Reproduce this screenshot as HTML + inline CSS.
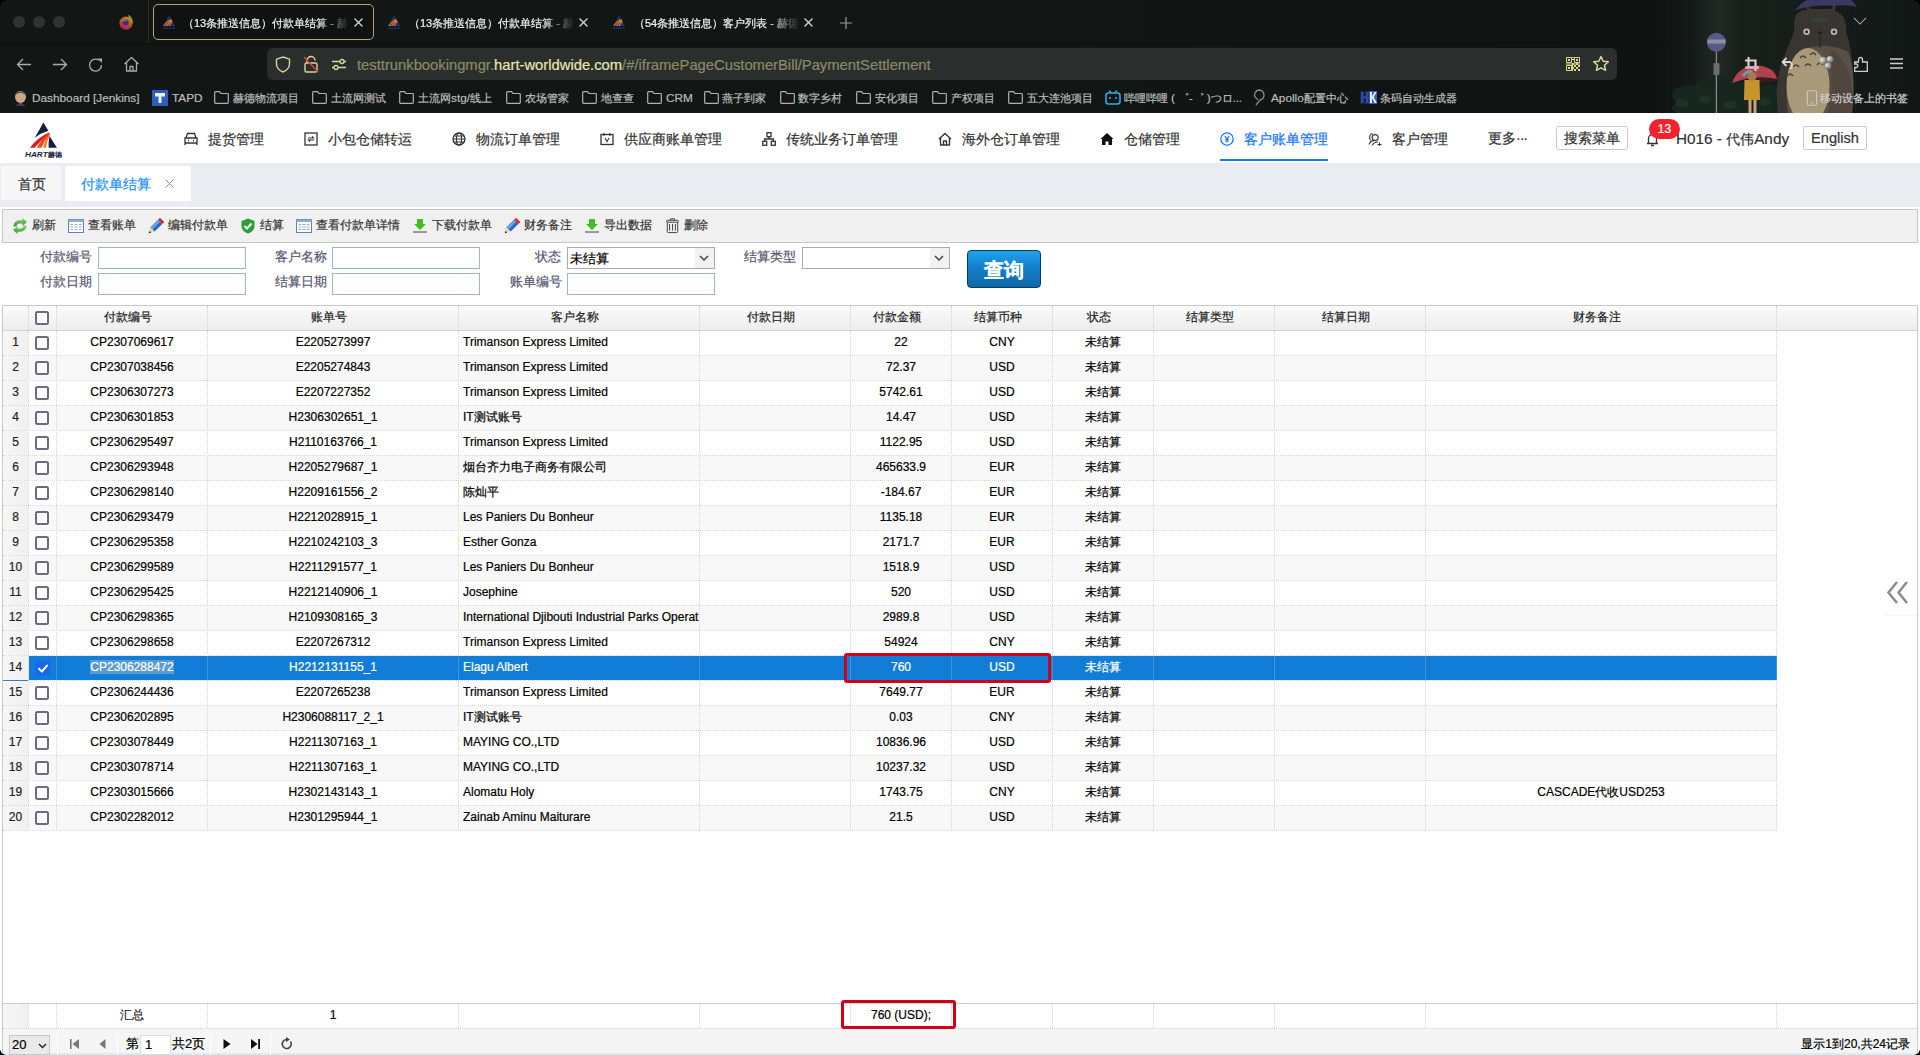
<!DOCTYPE html>
<html><head><meta charset="utf-8">
<style>
*{box-sizing:border-box;margin:0;padding:0}
html,body{width:1920px;height:1055px;overflow:hidden;background:#fff;font-family:"Liberation Sans",sans-serif;position:relative;-webkit-text-stroke:0.2px currentColor}
.a{position:absolute;white-space:nowrap}
#chrome{position:absolute;left:0;top:0;width:1920px;height:113px;background:linear-gradient(90deg,#121716 0%,#121716 50%,#0f1413 85%,#0e1312 100%);overflow:hidden}
#chrome .t{color:#f0f0f0;font-size:11px;font-weight:500}
#chrome .bm{color:#bdbdbd;font-size:11px;top:91px;line-height:14px;font-weight:500}
.L{font-size:11.8px}
#hdr{position:absolute;left:0;top:113px;width:1920px;height:50px;background:#fff}
#tabs{position:absolute;left:0;top:163px;width:1920px;height:44px;background:#e9ecf0}
#tb{position:absolute;left:2px;top:209px;width:1916px;height:34px;background:#f0f0f0;border:1px solid #c6c6c6}
.tbi{position:absolute;top:218px;font-size:12px;color:#333;line-height:15px}
.lbl{position:absolute;font-size:13px;color:#565670;line-height:15px}
.inp{position:absolute;height:22px;border:1px solid #9eb4ca;background:#fff;width:148px}
.sel{position:absolute;height:22px;border:1px solid #aaa;background:#fff;width:148px}

</style></head><body>
<div id="chrome">
<div class="a" style="left:13px;top:16px;width:12px;height:12px;border-radius:6px;background:#303332"></div>
<div class="a" style="left:33px;top:16px;width:12px;height:12px;border-radius:6px;background:#303332"></div>
<div class="a" style="left:53px;top:16px;width:12px;height:12px;border-radius:6px;background:#303332"></div>
<svg class="a" style="left:118px;top:14px" width="16" height="16" viewBox="0 0 16 16" opacity=".85">
<defs><linearGradient id="ff1" x1=".8" y1="0" x2=".3" y2="1"><stop offset="0" stop-color="#c8b02a"/><stop offset=".5" stop-color="#d0602a"/><stop offset="1" stop-color="#c81c6a"/></linearGradient></defs>
<circle cx="8" cy="9.2" r="6.6" fill="url(#ff1)"/><path d="M10.3 0.8 Q15.5 3.5 14.6 9.5 L11 6.5Z" fill="#b8a52a"/>
<path d="M1.5 7.5 Q3 4 6.5 4.2 Q4.8 5.5 5 8Z" fill="#c07a28"/>
<circle cx="7.6" cy="8.6" r="3" fill="#5526b0"/><path d="M5.5 5.8 Q8 4.8 9.5 6.5 Q7 6.2 5.5 8Z" fill="#c8902a"/></svg>
<div class="a" style="left:148px;top:0;width:1px;height:43px;background:#2b2e2e"></div>
<div class="a" style="left:0;top:43px;width:1920px;height:1px;background:#0b0e0d"></div>
<div class="a" style="left:153px;top:4px;width:221px;height:36px;border:1.5px solid #b5a66e;border-radius:5px;background:#0f1211"></div>
<svg class="a" style="left:161px;top:14px" width="16" height="16" viewBox="0 0 16 16">
<path d="M8 1.5 L14 12 L2 12Z" fill="#22346e"/><path d="M3 12 Q6 7 10.5 5.5 M5.5 12 Q8 7.5 11 6.5 M8 12 Q9.5 8.5 11.5 7.5" stroke="#e87a1e" stroke-width="1.2" fill="none"/><rect x="2" y="13.3" width="12" height="1.5" fill="#22346e" opacity=".8"/></svg>
<div class="a t" style="left:183px;top:15px;width:167px;overflow:hidden;line-height:16px;-webkit-mask-image:linear-gradient(90deg,#000 80%,transparent 100%)">（13条推送信息）付款单结算 - 赫德</div>
<svg class="a" style="left:354px;top:18px" width="9" height="9" viewBox="0 0 9 9"><path d="M0.5 0.5L8.5 8.5M8.5 0.5L0.5 8.5" stroke="#dcdcdc" stroke-width="1.2"/></svg>
<svg class="a" style="left:386px;top:14px" width="16" height="16" viewBox="0 0 16 16">
<path d="M8 1.5 L14 12 L2 12Z" fill="#22346e"/><path d="M3 12 Q6 7 10.5 5.5 M5.5 12 Q8 7.5 11 6.5 M8 12 Q9.5 8.5 11.5 7.5" stroke="#e87a1e" stroke-width="1.2" fill="none"/><rect x="2" y="13.3" width="12" height="1.5" fill="#22346e" opacity=".8"/></svg>
<div class="a t" style="left:409px;top:15px;width:166px;overflow:hidden;line-height:16px;-webkit-mask-image:linear-gradient(90deg,#000 80%,transparent 100%)">（13条推送信息）付款单结算 - 赫德</div>
<svg class="a" style="left:579px;top:18px" width="9" height="9" viewBox="0 0 9 9"><path d="M0.5 0.5L8.5 8.5M8.5 0.5L0.5 8.5" stroke="#dcdcdc" stroke-width="1.2"/></svg>
<svg class="a" style="left:611px;top:14px" width="16" height="16" viewBox="0 0 16 16">
<path d="M8 1.5 L14 12 L2 12Z" fill="#22346e"/><path d="M3 12 Q6 7 10.5 5.5 M5.5 12 Q8 7.5 11 6.5 M8 12 Q9.5 8.5 11.5 7.5" stroke="#e87a1e" stroke-width="1.2" fill="none"/><rect x="2" y="13.3" width="12" height="1.5" fill="#22346e" opacity=".8"/></svg>
<div class="a t" style="left:634px;top:15px;width:166px;overflow:hidden;line-height:16px;-webkit-mask-image:linear-gradient(90deg,#000 80%,transparent 100%)">（54条推送信息）客户列表 - 赫德</div>
<svg class="a" style="left:804px;top:18px" width="9" height="9" viewBox="0 0 9 9"><path d="M0.5 0.5L8.5 8.5M8.5 0.5L0.5 8.5" stroke="#dcdcdc" stroke-width="1.2"/></svg>
<svg class="a" style="left:840px;top:17px" width="12" height="12" viewBox="0 0 12 12"><path d="M6 0V12M0 6H12" stroke="#9a9a9a" stroke-width="1.2"/></svg>
<svg class="a" style="left:16px;top:58px" width="16" height="13" viewBox="0 0 16 13"><path d="M15 6.5H1.5M7 1L1.5 6.5L7 12" stroke="#aaa" stroke-width="1.3" fill="none"/></svg>
<svg class="a" style="left:52px;top:58px" width="16" height="13" viewBox="0 0 16 13"><path d="M1 6.5H14.5M9 1L14.5 6.5L9 12" stroke="#aaa" stroke-width="1.3" fill="none"/></svg>
<svg class="a" style="left:88px;top:57px" width="16" height="16" viewBox="0 0 16 16"><path d="M13.5 8A6 6 0 1 1 11 3.2" stroke="#aaa" stroke-width="1.3" fill="none"/><path d="M9.5 1.5L14 1.5L14 6Z" fill="#aaa"/></svg>
<svg class="a" style="left:123px;top:56px" width="17" height="16" viewBox="0 0 17 16"><path d="M1.5 8L8.5 1.5L15.5 8M3.5 6.5V15H13.5V6.5M7 15V10.5H10V15" stroke="#aaa" stroke-width="1.3" fill="none" stroke-linejoin="round"/></svg>
<div class="a" style="left:267px;top:48px;width:1350px;height:32px;border-radius:6px;background:#2a2f2d"></div>
<svg class="a" style="left:275px;top:56px" width="16" height="17" viewBox="0 0 16 17"><path d="M8 1L14.5 3.2V8C14.5 12 11 15 8 16C5 15 1.5 12 1.5 8V3.2Z" stroke="#d9d49a" stroke-width="1.4" fill="none"/></svg>
<svg class="a" style="left:303px;top:55px" width="16" height="18" viewBox="0 0 16 18"><path d="M4 8V5.5A4 4 0 0 1 12 5.5" stroke="#d9d49a" stroke-width="1.4" fill="none"/><rect x="2" y="8" width="12" height="9" rx="1.5" stroke="#d9d49a" stroke-width="1.4" fill="none"/><path d="M1 2L15 17" stroke="#e03a3a" stroke-width="1.5"/></svg>
<svg class="a" style="left:331px;top:58px" width="16" height="13" viewBox="0 0 16 13"><path d="M1 3.5H9M13 3.5H15M1 9.5H3M7 9.5H15" stroke="#d9d49a" stroke-width="1.3"/><circle cx="11" cy="3.5" r="2" stroke="#d9d49a" stroke-width="1.3" fill="none"/><circle cx="5" cy="9.5" r="2" stroke="#d9d49a" stroke-width="1.3" fill="none"/></svg>
<div class="a" style="left:357px;top:56px;font-size:14.78px;line-height:18px;color:#8c8967">testtrunkbookingmgr.<span style="color:#e9e6ad">hart-worldwide.com</span>/#/iframePageCustomerBill/PaymentSettlement</div>
<svg class="a" style="left:1566px;top:57px" width="14" height="14" viewBox="0 0 14 14" fill="#dcd894"><path d="M0.5 0.5H5.5V5.5H0.5Z" fill="none" stroke="#dcd894" stroke-width="1"/><rect x="2" y="2" width="2" height="2"/><path d="M8.5 0.5H13.5V5.5H8.5Z" fill="none" stroke="#dcd894" stroke-width="1"/><rect x="10" y="2" width="2" height="2"/><path d="M0.5 8.5H5.5V13.5H0.5Z" fill="none" stroke="#dcd894" stroke-width="1"/><rect x="2" y="10" width="2" height="2"/><rect x="6" y="0" width="2" height="1"/><rect x="6" y="2" width="2" height="1"/><rect x="0" y="6.5" width="14" height="1"/><rect x="6" y="6" width="1" height="8"/><rect x="6" y="6" width="2" height="2"/><rect x="10" y="6" width="2" height="2"/><rect x="8" y="8" width="2" height="2"/><rect x="12" y="8" width="2" height="2"/><rect x="6" y="10" width="2" height="2"/><rect x="10" y="10" width="2" height="2"/><rect x="8" y="12" width="2" height="2"/><rect x="12" y="12" width="2" height="2"/></svg>
<svg class="a" style="left:1592px;top:55px" width="18" height="17" viewBox="0 0 18 17"><path d="M9 1.5L11.2 6.2L16.3 6.8L12.5 10.3L13.6 15.3L9 12.8L4.4 15.3L5.5 10.3L1.7 6.8L6.8 6.2Z" stroke="#dcd894" stroke-width="1.5" fill="none" stroke-linejoin="round"/></svg>
<svg class="a" style="left:1660px;top:0" width="260" height="113" viewBox="0 0 260 113">
<defs>
<linearGradient id="tr" x1="0" x2="1"><stop offset="0" stop-color="#111513" stop-opacity="0"/><stop offset=".18" stop-color="#18201c"/><stop offset=".7" stop-color="#141a17"/><stop offset="1" stop-color="#101614"/></linearGradient>
<linearGradient id="trunk" x1="0" x2="1"><stop offset="0" stop-color="#262b26" stop-opacity="0"/><stop offset=".5" stop-color="#272c26"/><stop offset="1" stop-color="#262b26" stop-opacity="0"/></linearGradient>
<pattern id="rain" width="3" height="113" patternUnits="userSpaceOnUse"><rect x="0" y="0" width="1" height="113" fill="#ffffff" opacity=".01"/></pattern>
<radialGradient id="bell" cx=".35" cy=".35" r=".7"><stop offset="0" stop-color="#e8e8e0"/><stop offset="1" stop-color="#5a5a55"/></radialGradient>
</defs>
<rect x="0" y="0" width="260" height="113" fill="url(#tr)"/>
<rect x="38" y="0" width="42" height="113" fill="url(#trunk)" opacity=".6"/>
<g fill="#16261e">
<ellipse cx="30" cy="95" rx="18" ry="10"/><ellipse cx="55" cy="88" rx="20" ry="12"/><ellipse cx="80" cy="96" rx="22" ry="14"/>
<ellipse cx="40" cy="108" rx="28" ry="9"/><ellipse cx="100" cy="108" rx="26" ry="9"/><ellipse cx="110" cy="95" rx="14" ry="10"/>
</g>
<g fill="#223a2e" opacity=".6"><ellipse cx="22" cy="103" rx="7" ry="4"/><ellipse cx="45" cy="99" rx="6" ry="4"/><ellipse cx="70" cy="105" rx="7" ry="4"/><ellipse cx="105" cy="102" rx="6" ry="4"/></g>
<line x1="56.4" y1="48" x2="56.4" y2="113" stroke="#8a8890" stroke-width="1.2"/>
<rect x="53.5" y="63" width="6" height="12" rx="1" fill="#6a6a70"/>
<circle cx="56.4" cy="42.3" r="9.5" fill="#595887"/>
<rect x="47.5" y="39.5" width="18" height="4" fill="#8d8da8"/>
<path d="M94 69 L114 69 L120 80 L88 84 Z" fill="#3a1b1f"/>
<path d="M72 83 Q78 66 96 65.5 Q114 66 117 79 Q96 74 72 83Z" fill="#b0424e"/>
<path d="M84.5 80 L99.5 80 L100 100 L84 100Z" fill="#c7952e"/>
<circle cx="92" cy="76.5" r="4.5" fill="#a57a4a"/>
<path d="M83 76 Q88 70 92 72" stroke="#6a9ab0" stroke-width="3" fill="none"/>
<rect x="88.5" y="100" width="3" height="13" fill="#c9a07a"/><rect x="93.5" y="100" width="3" height="13" fill="#c9a07a"/>
<path d="M118 113 C115 92 117 70 126 52 C130 40 136 33 134 24 C134 14 140 10 147 10 L144 1 L151 9 L171 9 L176 1 L175 11 C184 14 187 22 186 32 C190 42 193 60 193 80 C193 95 192 105 190 113Z" fill="#38342f"/>
<path d="M128 113 C124 90 128 62 140 52 C150 44 175 44 188 52 C194 65 195 90 192 113Z" fill="#5a4f45"/>
<ellipse cx="148" cy="86" rx="21.5" ry="38" fill="#a89a77"/>
<path d="M170 50 C182 55 192 70 192 95 L192 113 L168 113 C172 95 172 70 170 50Z" fill="#4f453d"/>
<g stroke="#4a4642" stroke-width="1.6" fill="none"><path d="M140 58 Q143 54 146 58"/><path d="M150 55 Q153 51 156 55"/><path d="M133 67 Q136 63 139 67"/><path d="M145 66 Q148 62 151 66"/><path d="M157 65 Q160 61 163 65"/><path d="M127 76 Q130 72 133 76"/></g>
<path d="M135 10 Q150 -8 175 -6 Q192 -3 197 7 Q186 4 175 6 Q155 4 135 10Z" fill="#3a3760"/>
<path d="M150 20 Q160 16 170 20 Q160 24 150 20Z" fill="#2c4a30"/>
<circle cx="146.6" cy="31.8" r="3.3" fill="#b9b6bb"/><circle cx="146.6" cy="31.8" r="1.5" fill="#2a2725"/>
<circle cx="174" cy="31.8" r="3.3" fill="#b9b6bb"/><circle cx="174" cy="31.8" r="1.5" fill="#2a2725"/>
<ellipse cx="160" cy="32.7" rx="2.5" ry="1.2" fill="#1e1b1a"/>
<path d="M160 34 L160 48" stroke="#222" stroke-width="1"/>
<circle cx="163" cy="61" r="4.2" fill="url(#bell)"/><circle cx="170" cy="59.5" r="3.6" fill="url(#bell)"/><circle cx="168" cy="66" r="3.6" fill="url(#bell)"/>
<rect x="0" y="0" width="260" height="113" fill="url(#rain)"/>
</svg>
<svg class="a" style="left:1853px;top:17px" width="14" height="8" viewBox="0 0 16 9"><path d="M1 1L8 8L15 1" stroke="#a0a0a0" stroke-width="1.3" fill="none"/></svg>
<div class="a" style="left:0;top:0;width:7px;height:7px;background:radial-gradient(circle at 7px 7px,transparent 6.5px,#000 7px)"></div>
<div class="a" style="left:1913px;top:0;width:7px;height:7px;background:radial-gradient(circle at 0 7px,transparent 6.5px,#000 7px)"></div>
<svg class="a" style="left:1745px;top:57px" width="14" height="14" viewBox="0 0 14 14"><path d="M3.5 0V10.5H14M0 3.5H10.5V14" stroke="#d6d0d0" stroke-width="2.2" fill="none"/><path d="M0 10.5H14" stroke="#e8b0c0" stroke-width="2.2"/></svg>
<svg class="a" style="left:1781px;top:57px" width="14" height="12" viewBox="0 0 14 12"><path d="M1.5 5H9A4 4 0 0 1 9 12M5.5 1L1.5 5L5.5 9" stroke="#d8d8d8" stroke-width="1.8" fill="none"/></svg>
<svg class="a" style="left:1854px;top:56px" width="14" height="16" viewBox="0 0 14 16"><path d="M.7 6H4.5V3.5A2 2 0 0 1 8.5 3.5V6H13.3V15.3H.7V11.5H2.5A1.8 1.8 0 0 0 2.5 8H.7Z" stroke="#cfcfcf" stroke-width="1.3" fill="none"/></svg>
<svg class="a" style="left:1890px;top:58px" width="13" height="11" viewBox="0 0 13 11"><path d="M0 1H13M0 5.5H13M0 10H13" stroke="#cfcfcf" stroke-width="1.3"/></svg>
<svg class="a" style="left:13px;top:90px" width="15" height="16" viewBox="0 0 15 16"><ellipse cx="7.5" cy="7" rx="5.5" ry="6" fill="#c8a888"/><path d="M2 16Q7.5 10 13 16Z" fill="#2a3a5a"/><path d="M6 13L9 13L7.5 15Z" fill="#d03030"/><path d="M3 4Q7 0 12 4" stroke="#555" stroke-width="1.5" fill="none"/></svg>
<div class="a bm" style="left:32px"><span class="L">Dashboard [Jenkins]</span></div>
<svg class="a" style="left:152px;top:90px" width="16" height="16" viewBox="0 0 16 16"><rect width="16" height="16" fill="#2e5fb8"/><path d="M3 3H13V6.5H9.5V13H6.5V6.5H3Z" fill="#e9eef8"/></svg>
<div class="a bm" style="left:172px"><span class="L">TAPD</span></div>
<svg class="a" style="left:214px;top:91px" width="15" height="13" viewBox="0 0 15 13"><path d="M0.7 1.5A.8.8 0 0 1 1.5 .7H5.5L7 2.5H13.5A.8.8 0 0 1 14.3 3.3V11.5A.8.8 0 0 1 13.5 12.3H1.5A.8.8 0 0 1 .7 11.5Z" stroke="#b0b0b0" stroke-width="1.2" fill="none"/></svg>
<div class="a bm" style="left:233px">赫德物流项目</div>
<svg class="a" style="left:312px;top:91px" width="15" height="13" viewBox="0 0 15 13"><path d="M0.7 1.5A.8.8 0 0 1 1.5 .7H5.5L7 2.5H13.5A.8.8 0 0 1 14.3 3.3V11.5A.8.8 0 0 1 13.5 12.3H1.5A.8.8 0 0 1 .7 11.5Z" stroke="#b0b0b0" stroke-width="1.2" fill="none"/></svg>
<div class="a bm" style="left:331px">土流网测试</div>
<svg class="a" style="left:399px;top:91px" width="15" height="13" viewBox="0 0 15 13"><path d="M0.7 1.5A.8.8 0 0 1 1.5 .7H5.5L7 2.5H13.5A.8.8 0 0 1 14.3 3.3V11.5A.8.8 0 0 1 13.5 12.3H1.5A.8.8 0 0 1 .7 11.5Z" stroke="#b0b0b0" stroke-width="1.2" fill="none"/></svg>
<div class="a bm" style="left:418px">土流网<span class="L">stg/</span>线上</div>
<svg class="a" style="left:506px;top:91px" width="15" height="13" viewBox="0 0 15 13"><path d="M0.7 1.5A.8.8 0 0 1 1.5 .7H5.5L7 2.5H13.5A.8.8 0 0 1 14.3 3.3V11.5A.8.8 0 0 1 13.5 12.3H1.5A.8.8 0 0 1 .7 11.5Z" stroke="#b0b0b0" stroke-width="1.2" fill="none"/></svg>
<div class="a bm" style="left:525px">农场管家</div>
<svg class="a" style="left:582px;top:91px" width="15" height="13" viewBox="0 0 15 13"><path d="M0.7 1.5A.8.8 0 0 1 1.5 .7H5.5L7 2.5H13.5A.8.8 0 0 1 14.3 3.3V11.5A.8.8 0 0 1 13.5 12.3H1.5A.8.8 0 0 1 .7 11.5Z" stroke="#b0b0b0" stroke-width="1.2" fill="none"/></svg>
<div class="a bm" style="left:601px">地查查</div>
<svg class="a" style="left:647px;top:91px" width="15" height="13" viewBox="0 0 15 13"><path d="M0.7 1.5A.8.8 0 0 1 1.5 .7H5.5L7 2.5H13.5A.8.8 0 0 1 14.3 3.3V11.5A.8.8 0 0 1 13.5 12.3H1.5A.8.8 0 0 1 .7 11.5Z" stroke="#b0b0b0" stroke-width="1.2" fill="none"/></svg>
<div class="a bm" style="left:666px"><span class="L">CRM</span></div>
<svg class="a" style="left:704px;top:91px" width="15" height="13" viewBox="0 0 15 13"><path d="M0.7 1.5A.8.8 0 0 1 1.5 .7H5.5L7 2.5H13.5A.8.8 0 0 1 14.3 3.3V11.5A.8.8 0 0 1 13.5 12.3H1.5A.8.8 0 0 1 .7 11.5Z" stroke="#b0b0b0" stroke-width="1.2" fill="none"/></svg>
<div class="a bm" style="left:722px">燕子到家</div>
<svg class="a" style="left:780px;top:91px" width="15" height="13" viewBox="0 0 15 13"><path d="M0.7 1.5A.8.8 0 0 1 1.5 .7H5.5L7 2.5H13.5A.8.8 0 0 1 14.3 3.3V11.5A.8.8 0 0 1 13.5 12.3H1.5A.8.8 0 0 1 .7 11.5Z" stroke="#b0b0b0" stroke-width="1.2" fill="none"/></svg>
<div class="a bm" style="left:798px">数字乡村</div>
<svg class="a" style="left:856px;top:91px" width="15" height="13" viewBox="0 0 15 13"><path d="M0.7 1.5A.8.8 0 0 1 1.5 .7H5.5L7 2.5H13.5A.8.8 0 0 1 14.3 3.3V11.5A.8.8 0 0 1 13.5 12.3H1.5A.8.8 0 0 1 .7 11.5Z" stroke="#b0b0b0" stroke-width="1.2" fill="none"/></svg>
<div class="a bm" style="left:875px">安化项目</div>
<svg class="a" style="left:932px;top:91px" width="15" height="13" viewBox="0 0 15 13"><path d="M0.7 1.5A.8.8 0 0 1 1.5 .7H5.5L7 2.5H13.5A.8.8 0 0 1 14.3 3.3V11.5A.8.8 0 0 1 13.5 12.3H1.5A.8.8 0 0 1 .7 11.5Z" stroke="#b0b0b0" stroke-width="1.2" fill="none"/></svg>
<div class="a bm" style="left:951px">产权项目</div>
<svg class="a" style="left:1008px;top:91px" width="15" height="13" viewBox="0 0 15 13"><path d="M0.7 1.5A.8.8 0 0 1 1.5 .7H5.5L7 2.5H13.5A.8.8 0 0 1 14.3 3.3V11.5A.8.8 0 0 1 13.5 12.3H1.5A.8.8 0 0 1 .7 11.5Z" stroke="#b0b0b0" stroke-width="1.2" fill="none"/></svg>
<div class="a bm" style="left:1027px">五大连池项目</div>
<svg class="a" style="left:1105px;top:90px" width="16" height="15" viewBox="0 0 16 15"><rect x="1" y="3" width="14" height="11" rx="2.5" stroke="#3aa7e0" stroke-width="1.6" fill="none"/><path d="M4 0.5L6.5 3M12 0.5L9.5 3" stroke="#3aa7e0" stroke-width="1.4"/><path d="M5 7V9M11 7V9" stroke="#3aa7e0" stroke-width="1.6"/></svg>
<div class="a bm" style="left:1124px">哔哩哔哩 <span class="L">(</span>&nbsp;゜-゜&nbsp;<span class="L">)</span>つロ...</div>
<svg class="a" style="left:1252px;top:89px" width="15" height="17" viewBox="0 0 15 17"><path d="M7 1A5 5 0 0 1 12 6Q12 10 8 11L4 16M7 1A5 5 0 0 0 3 8L6 11" stroke="#8a8a8a" stroke-width="1.3" fill="none"/></svg>
<div class="a bm" style="left:1271px"><span class="L">Apollo</span>配置中心</div>
<svg class="a" style="left:1360px;top:91px" width="17" height="13" viewBox="0 0 17 13"><rect x="0" y="0" width="17" height="13" fill="#2a3f9a" opacity=".35"/><path d="M1 1H3.5V5.2H6V1H8.5V12H6V7.5H3.5V12H1Z" fill="#2e46b0"/><rect x="9" y="0" width="8" height="13" fill="#3a5ac0"/><path d="M10 1H12V5.8L14.5 1H16.6L13.8 6.2L16.8 12H14.6L12 7V12H10Z" fill="#e8ecf5"/></svg>
<div class="a bm" style="left:1380px">条码自动生成器</div>
<svg class="a" style="left:1806px;top:90px" width="12" height="16" viewBox="0 0 12 18"><rect x=".8" y=".8" width="10.4" height="16.4" rx="2" stroke="#c8c8c8" stroke-width="1.3" fill="none"/><path d="M4.5 14.5H7.5" stroke="#c8c8c8" stroke-width="1"/></svg>
<div class="a bm" style="left:1820px;color:#cfcfcf">移动设备上的书签</div>
</div>
<div id="hdr"></div>
<svg class="a" style="left:23px;top:121px" width="42" height="38" viewBox="0 0 42 38">
<path d="M20.4 1.5 L25.4 9.7 Q18 11.8 11.8 16.7 Z" fill="#13213f"/>
<path d="M26.5 14.9 L34 26.7 L25.6 26.7 Q25.4 20 26.5 14.9Z" fill="#13213f"/>
<path d="M7 26.7 Q14 17 26 11.6 L26.6 12.8 Q18.5 18.5 11.5 26.7Z" fill="#e5161d"/>
<path d="M13.8 26.7 Q18.5 18 26.2 12.3 L26.8 13.5 Q21.5 19.5 18.4 26.7Z" fill="#ee4a1c"/>
<path d="M20.2 26.7 Q22.3 18 26.4 13 L27 14.2 Q23.8 20 22.9 26.7Z" fill="#f27a28"/>
<text x="2" y="35.6" font-family="Liberation Sans" font-weight="bold" font-style="italic" font-size="7.6" fill="#13213f" textLength="22.7" lengthAdjust="spacingAndGlyphs" style="-webkit-text-stroke:0">HART</text>
<text x="25.4" y="35.8" font-family="Liberation Sans" font-weight="bold" font-size="6.6" fill="#13213f" textLength="14" lengthAdjust="spacingAndGlyphs" style="-webkit-text-stroke:0">赫德</text>
</svg>
<svg class="a" style="left:184px;top:132px" width="14" height="14" viewBox="0 0 14 14"><path d="M2 6L3.5 1.5H10.5L12 6M1 6H13V11H1Z M1 11V13M13 11V13 M4 8.5H5M9 8.5H10" stroke="#333" stroke-width="1.3" fill="none"/></svg>
<div class="a" style="left:208px;top:131px;font-size:14px;line-height:17px;color:#333">提货管理</div>
<svg class="a" style="left:304px;top:132px" width="14" height="14" viewBox="0 0 14 14"><rect x="1" y="1" width="12" height="12" stroke="#333" stroke-width="1.3" fill="none"/><path d="M4 6H9.5L8 4.5M10 8H4.5L6 9.5" stroke="#333" stroke-width="1.1" fill="none"/></svg>
<div class="a" style="left:328px;top:131px;font-size:14px;line-height:17px;color:#333">小包仓储转运</div>
<svg class="a" style="left:452px;top:132px" width="14" height="14" viewBox="0 0 14 14"><circle cx="7" cy="7" r="6" stroke="#333" stroke-width="1.3" fill="none"/><ellipse cx="7" cy="7" rx="2.6" ry="6" stroke="#333" stroke-width="1.1" fill="none"/><path d="M1 7H13M2 4H12M2 10H12" stroke="#333" stroke-width="1.1"/></svg>
<div class="a" style="left:476px;top:131px;font-size:14px;line-height:17px;color:#333">物流订单管理</div>
<svg class="a" style="left:600px;top:132px" width="14" height="14" viewBox="0 0 14 14"><rect x="1" y="2.5" width="12" height="10" stroke="#333" stroke-width="1.3" fill="none"/><path d="M4 1V4M10 1V4M5 6L7 9.5L9 6M7 8V10.5" stroke="#333" stroke-width="1.1" fill="none"/></svg>
<div class="a" style="left:624px;top:131px;font-size:14px;line-height:17px;color:#333">供应商账单管理</div>
<svg class="a" style="left:762px;top:132px" width="14" height="14" viewBox="0 0 14 14"><rect x="5" y="0.7" width="4" height="4" stroke="#333" stroke-width="1.3" fill="none"/><rect x="0.7" y="9.3" width="4" height="4" stroke="#333" stroke-width="1.3" fill="none"/><rect x="9.3" y="9.3" width="4" height="4" stroke="#333" stroke-width="1.3" fill="none"/><path d="M7 4.7V7H2.7V9.3M7 7H11.3V9.3" stroke="#333" stroke-width="1.3" fill="none"/></svg>
<div class="a" style="left:786px;top:131px;font-size:14px;line-height:17px;color:#333">传统业务订单管理</div>
<svg class="a" style="left:938px;top:132px" width="14" height="14" viewBox="0 0 14 14"><path d="M1 7L7 1.5L13 7M2.5 5.8V13H11.5V5.8M5.5 13V9H8.5V13" stroke="#333" stroke-width="1.4" fill="none" stroke-linejoin="round"/></svg>
<div class="a" style="left:962px;top:131px;font-size:14px;line-height:17px;color:#333">海外仓订单管理</div>
<svg class="a" style="left:1100px;top:132px" width="14" height="14" viewBox="0 0 14 14"><path d="M0.5 7L7 1L13.5 7H12V13H8.5V9.5H5.5V13H2V7Z" fill="#111"/></svg>
<div class="a" style="left:1124px;top:131px;font-size:14px;line-height:17px;color:#333">仓储管理</div>
<svg class="a" style="left:1220px;top:132px" width="14" height="14" viewBox="0 0 14 14"><circle cx="7" cy="7" r="6.2" stroke="#1677ff" stroke-width="1.3" fill="none"/><path d="M4.8 3.8L7 6.8L9.2 3.8M7 6.8V10.5M5 7.3H9M5 9H9" stroke="#1677ff" stroke-width="1.1" fill="none"/></svg>
<div class="a" style="left:1244px;top:131px;font-size:14px;line-height:17px;color:#1677ff">客户账单管理</div>
<svg class="a" style="left:1368px;top:132px" width="14" height="14" viewBox="0 0 14 14"><g fill="none" stroke="#333" stroke-width="1.1"><circle cx="7.2" cy="5.6" r="3"/><path d="M1 12.5Q2.5 8.5 6 8.6"/><path d="M5 2.2Q3.2 1 2 3.5Q1 6 2.5 8.5"/><path d="M4 13.2Q6.5 9.5 10 10"/><path d="M11.5 10.5V14.5M9.5 12.5H13.5"/></g></svg>
<div class="a" style="left:1392px;top:131px;font-size:14px;line-height:17px;color:#333">客户管理</div>
<div class="a" style="left:1220px;top:159px;width:108px;height:2px;background:#1677ff"></div>
<div class="a" style="left:1488px;top:130px;font-size:14px;line-height:17px;color:#333">更多<span style="letter-spacing:-1px">···</span></div>
<div class="a" style="left:1556px;top:126px;width:72px;height:24px;border:1px solid #c9c9c9;border-radius:3px;font-size:14px;line-height:22px;color:#333;text-align:center">搜索菜单</div>
<svg class="a" style="left:1645px;top:132px" width="15" height="15" viewBox="0 0 15 15"><path d="M2 11.5H13M3.5 11.5V6.5A4 4 0 0 1 11.5 6.5V11.5M6 13.5H9" stroke="#333" stroke-width="1.3" fill="none"/></svg>
<div class="a" style="left:1649px;top:119px;width:31px;height:20px;border-radius:10px;background:#f5222d;color:#fff;font-size:12px;line-height:20px;text-align:center">13</div>
<div class="a" style="left:1676px;top:130px;font-size:14px;line-height:17px;color:#333"><span style="font-size:15.3px">H016 - </span>代伟<span style="font-size:15.3px">Andy</span></div>
<div class="a" style="left:1803px;top:126px;width:64px;height:24px;border:1px solid #c9c9c9;border-radius:2px;font-size:14px;line-height:22px;color:#333;text-align:center;font-size:14.6px">English</div>
<div id="tabs"></div>
<div class="a" style="left:1px;top:166px;width:60px;height:34px;background:#f7f7f7"></div>
<div class="a" style="left:18px;top:176px;font-size:14px;line-height:17px;color:#333">首页</div>
<div class="a" style="left:65px;top:166px;width:126px;height:35px;background:#fff"></div>
<div class="a" style="left:81px;top:176px;font-size:14px;line-height:17px;color:#1890ff">付款单结算</div>
<svg class="a" style="left:165px;top:178.5px" width="9" height="9" viewBox="0 0 9 9"><path d="M.5 .5L8.5 8.5M8.5 .5L.5 8.5" stroke="#8a8a8a" stroke-width="1"/></svg>
<div class="a" style="left:0;top:207px;width:1920px;height:2px;background:#fff"></div>
<div id="tb"></div>
<svg class="a" style="left:12px;top:218px" width="16" height="16" viewBox="0 0 16 16"><defs><linearGradient id="rg" x1="0" y1="0" x2="0" y2="1"><stop offset="0" stop-color="#8fd07a"/><stop offset="1" stop-color="#2f9a3a"/></linearGradient></defs><path d="M1.5 8.5C1.5 4.5 4.5 2.3 8 2.3L10.5 2.3L10.5 0L15 4L10.5 8L10.5 5.5L8 5.5C6 5.5 4.5 6.8 4.5 8.5Z" fill="url(#rg)"/><path d="M14.5 7.5C14.5 11.5 11.5 13.7 8 13.7L5.5 13.7L5.5 16L1 12L5.5 8L5.5 10.5L8 10.5C10 10.5 11.5 9.2 11.5 7.5Z" fill="url(#rg)"/></svg>
<div class="tbi" style="left:32px">刷新</div>
<svg class="a" style="left:68px;top:218px" width="16" height="16" viewBox="0 0 16 16"><rect x=".5" y="1.5" width="15" height="13" fill="#fff" stroke="#5b7fc0"/><rect x=".5" y="1.5" width="15" height="2.5" fill="#8aaee0"/><path d="M2.5 6.5H5M6.5 6.5H9.5M11 6.5H13.5M2.5 9H5M6.5 9H9.5M11 9H13.5M2.5 11.5H5M6.5 11.5H9.5M11 11.5H13.5" stroke="#9aa8c0" stroke-width="1"/></svg>
<div class="tbi" style="left:88px">查看账单</div>
<svg class="a" style="left:148px;top:218px" width="16" height="16" viewBox="0 0 16 16"><path d="M2.4 9.4L10.1 1.7L14.3 5.9L6.6 13.6Z" fill="#2a66c8"/><path d="M2.4 9.4L10.1 1.7L12.2 3.8L4.5 11.5Z" fill="#6aa2ee"/><path d="M10.1 1.7L12 -0.2L16.2 4L14.3 5.9Z" fill="#e02828"/><path d="M2.4 9.4L6.6 13.6L0.8 15.2Z" fill="#f1d59a"/><path d="M0.8 15.2L1.5 12.9L3.1 14.5Z" fill="#111"/></svg>
<div class="tbi" style="left:168px">编辑付款单</div>
<svg class="a" style="left:240px;top:218px" width="16" height="16" viewBox="0 0 16 16"><path d="M8 .5L14.5 3V8C14.5 12 11 14.8 8 15.5C5 14.8 1.5 12 1.5 8V3Z" fill="#2e9e3a"/><path d="M4.5 8L7 10.5L11.5 5.5" stroke="#fff" stroke-width="2" fill="none"/></svg>
<div class="tbi" style="left:260px">结算</div>
<svg class="a" style="left:296px;top:218px" width="16" height="16" viewBox="0 0 16 16"><rect x=".5" y="1.5" width="15" height="13" fill="#fff" stroke="#5b7fc0"/><rect x=".5" y="1.5" width="15" height="2.5" fill="#8aaee0"/><path d="M2.5 6.5H5M6.5 6.5H9.5M11 6.5H13.5M2.5 9H5M6.5 9H9.5M11 9H13.5M2.5 11.5H5M6.5 11.5H9.5M11 11.5H13.5" stroke="#9aa8c0" stroke-width="1"/></svg>
<div class="tbi" style="left:316px">查看付款单详情</div>
<svg class="a" style="left:412px;top:218px" width="16" height="16" viewBox="0 0 16 16"><path d="M5 1H11V6H14L8 12L2 6H5Z" fill="#42c01e"/><rect x="1" y="13" width="14" height="2" fill="#999"/></svg>
<div class="tbi" style="left:432px">下载付款单</div>
<svg class="a" style="left:504px;top:218px" width="16" height="16" viewBox="0 0 16 16"><path d="M2.4 9.4L10.1 1.7L14.3 5.9L6.6 13.6Z" fill="#2a66c8"/><path d="M2.4 9.4L10.1 1.7L12.2 3.8L4.5 11.5Z" fill="#6aa2ee"/><path d="M10.1 1.7L12 -0.2L16.2 4L14.3 5.9Z" fill="#e02828"/><path d="M2.4 9.4L6.6 13.6L0.8 15.2Z" fill="#f1d59a"/><path d="M0.8 15.2L1.5 12.9L3.1 14.5Z" fill="#111"/></svg>
<div class="tbi" style="left:524px">财务备注</div>
<svg class="a" style="left:584px;top:218px" width="16" height="16" viewBox="0 0 16 16"><path d="M5 1H11V6H14L8 12L2 6H5Z" fill="#42c01e"/><rect x="1" y="13" width="14" height="2" fill="#999"/></svg>
<div class="tbi" style="left:604px">导出数据</div>
<svg class="a" style="left:666px;top:218px" width="16" height="16" viewBox="0 0 16 16"><g fill="none" stroke="#444" stroke-width="1"><path d="M4.5 2.2V0.8H8.5V2.2"/><rect x="0.5" y="2.3" width="12" height="1.9" rx="0.9"/><path d="M1.3 4.2V13.6Q1.3 14.6 2.3 14.6H10.7Q11.7 14.6 11.7 13.6V4.2"/><path d="M3.6 6V12.6M6.5 6V12.6M9.4 6V12.6"/></g></svg>
<div class="tbi" style="left:684px">删除</div>
<div class="lbl" style="left:40px;top:249px">付款编号</div>
<div class="lbl" style="left:40px;top:274px">付款日期</div>
<div class="lbl" style="left:275px;top:249px">客户名称</div>
<div class="lbl" style="left:275px;top:274px">结算日期</div>
<div class="lbl" style="left:535px;top:249px">状态</div>
<div class="lbl" style="left:510px;top:274px">账单编号</div>
<div class="lbl" style="left:744px;top:249px">结算类型</div>
<div class="inp" style="left:98px;top:247px"></div>
<div class="inp" style="left:98px;top:273px"></div>
<div class="inp" style="left:332px;top:247px"></div>
<div class="inp" style="left:332px;top:273px"></div>
<div class="inp" style="left:567px;top:273px"></div>
<div class="sel" style="left:567px;top:247px"><div style="position:absolute;left:2px;top:3px;font-size:13px;line-height:15px;color:#000">未结算</div><div style="position:absolute;right:0;top:0;width:19px;height:20px;background:#f2f2f2"></div><svg style="position:absolute;right:5px;top:7px" width="10" height="7" viewBox="0 0 10 7"><path d="M1 1L5 5L9 1" stroke="#444" stroke-width="1.5" fill="none"/></svg></div>
<div class="sel" style="left:802px;top:247px"><div style="position:absolute;left:2px;top:3px;font-size:13px;line-height:15px;color:#000"></div><div style="position:absolute;right:0;top:0;width:19px;height:20px;background:#f2f2f2"></div><svg style="position:absolute;right:5px;top:7px" width="10" height="7" viewBox="0 0 10 7"><path d="M1 1L5 5L9 1" stroke="#444" stroke-width="1.5" fill="none"/></svg></div>
<div class="a" style="left:967px;top:250px;width:74px;height:38px;border:1px solid #0a3a5e;border-radius:4px;background:linear-gradient(#22a3ec,#1180cc 45%,#1168a6);color:#fff;font-size:20px;font-weight:bold;line-height:38px;text-align:center;letter-spacing:0px">查询</div>
<div class="a" style="left:2px;top:305px;width:1916px;height:750px;border:1px solid #c9c9c9;border-bottom:none"></div>
<div class="a" style="left:3px;top:306px;width:1914px;height:24px;background:linear-gradient(#fbfbfb,#ededed)"></div>
<div class="a" style="left:3px;top:330px;width:1914px;height:1px;background:#d3d3d3"></div>
<div class="a" style="left:28px;top:306px;width:1px;height:24px;border-left:1px dotted #d0d0d0"></div>
<div class="a" style="left:56px;top:306px;width:1px;height:24px;border-left:1px dotted #d0d0d0"></div>
<div class="a" style="left:207px;top:306px;width:1px;height:24px;border-left:1px dotted #d0d0d0"></div>
<div class="a" style="left:458px;top:306px;width:1px;height:24px;border-left:1px dotted #d0d0d0"></div>
<div class="a" style="left:699px;top:306px;width:1px;height:24px;border-left:1px dotted #d0d0d0"></div>
<div class="a" style="left:850px;top:306px;width:1px;height:24px;border-left:1px dotted #d0d0d0"></div>
<div class="a" style="left:951px;top:306px;width:1px;height:24px;border-left:1px dotted #d0d0d0"></div>
<div class="a" style="left:1052px;top:306px;width:1px;height:24px;border-left:1px dotted #d0d0d0"></div>
<div class="a" style="left:1153px;top:306px;width:1px;height:24px;border-left:1px dotted #d0d0d0"></div>
<div class="a" style="left:1274px;top:306px;width:1px;height:24px;border-left:1px dotted #d0d0d0"></div>
<div class="a" style="left:1425px;top:306px;width:1px;height:24px;border-left:1px dotted #d0d0d0"></div>
<div class="a" style="left:1776px;top:306px;width:1px;height:24px;border-left:1px dotted #d0d0d0"></div>
<div class="a" style="left:56.5px;top:309px;width:151.0px;text-align:center;padding-right:8px;font-size:12px;line-height:16px;color:#222;font-weight:500">付款编号</div>
<div class="a" style="left:207.5px;top:309px;width:251.0px;text-align:center;padding-right:8px;font-size:12px;line-height:16px;color:#222;font-weight:500">账单号</div>
<div class="a" style="left:458.5px;top:309px;width:241.0px;text-align:center;padding-right:8px;font-size:12px;line-height:16px;color:#222;font-weight:500">客户名称</div>
<div class="a" style="left:699.5px;top:309px;width:151.0px;text-align:center;padding-right:8px;font-size:12px;line-height:16px;color:#222;font-weight:500">付款日期</div>
<div class="a" style="left:850.5px;top:309px;width:101.0px;text-align:center;padding-right:8px;font-size:12px;line-height:16px;color:#222;font-weight:500">付款金额</div>
<div class="a" style="left:951.5px;top:309px;width:101.0px;text-align:center;padding-right:8px;font-size:12px;line-height:16px;color:#222;font-weight:500">结算币种</div>
<div class="a" style="left:1052.5px;top:309px;width:101.0px;text-align:center;padding-right:8px;font-size:12px;line-height:16px;color:#222;font-weight:500">状态</div>
<div class="a" style="left:1153.5px;top:309px;width:121.0px;text-align:center;padding-right:8px;font-size:12px;line-height:16px;color:#222;font-weight:500">结算类型</div>
<div class="a" style="left:1274.5px;top:309px;width:151.0px;text-align:center;padding-right:8px;font-size:12px;line-height:16px;color:#222;font-weight:500">结算日期</div>
<div class="a" style="left:1425.5px;top:309px;width:351.0px;text-align:center;padding-right:8px;font-size:12px;line-height:16px;color:#222;font-weight:500">财务备注</div>
<div class="a" style="left:35px;top:311px;width:14px;height:14px;border-radius:2.5px;border:2px solid #6d6a80;background:#fff"></div>
<div class="a" style="left:3px;top:331px;width:25px;height:24px;background:linear-gradient(90deg,#f7f7f7,#f0f0f0)"></div>
<div class="a" style="left:3px;top:334px;width:25px;text-align:center;font-size:12px;line-height:16px;color:#222">1</div>
<div class="a" style="left:29px;top:331px;width:1748px;height:24px;background:#fff"></div>
<div class="a" style="left:3px;top:355px;width:1774px;height:1px;border-top:1px dotted #d6d6d6"></div>
<div class="a" style="left:56.5px;top:334px;width:151.0px;text-align:center;font-size:12px;line-height:16px;color:#000">CP2307069617</div>
<div class="a" style="left:207.5px;top:334px;width:251.0px;text-align:center;font-size:12px;line-height:16px;color:#000">E2205273997</div>
<div class="a" style="left:463.0px;top:334px;width:236.0px;overflow:hidden;font-size:12px;line-height:16px;color:#000">Trimanson Express Limited</div>
<div class="a" style="left:850.5px;top:334px;width:101.0px;text-align:center;font-size:12px;line-height:16px;color:#000">22</div>
<div class="a" style="left:951.5px;top:334px;width:101.0px;text-align:center;font-size:12px;line-height:16px;color:#000">CNY</div>
<div class="a" style="left:1052.5px;top:334px;width:101.0px;text-align:center;font-size:12px;line-height:16px;color:#000">未结算</div>
<div class="a" style="left:35px;top:336px;width:14px;height:14px;border-radius:2.5px;border:2px solid #6d6a80;background:#fff"></div>
<div class="a" style="left:3px;top:356px;width:25px;height:24px;background:linear-gradient(90deg,#f7f7f7,#f0f0f0)"></div>
<div class="a" style="left:3px;top:359px;width:25px;text-align:center;font-size:12px;line-height:16px;color:#222">2</div>
<div class="a" style="left:29px;top:356px;width:1748px;height:24px;background:#f8f8f8"></div>
<div class="a" style="left:3px;top:380px;width:1774px;height:1px;border-top:1px dotted #d6d6d6"></div>
<div class="a" style="left:56.5px;top:359px;width:151.0px;text-align:center;font-size:12px;line-height:16px;color:#000">CP2307038456</div>
<div class="a" style="left:207.5px;top:359px;width:251.0px;text-align:center;font-size:12px;line-height:16px;color:#000">E2205274843</div>
<div class="a" style="left:463.0px;top:359px;width:236.0px;overflow:hidden;font-size:12px;line-height:16px;color:#000">Trimanson Express Limited</div>
<div class="a" style="left:850.5px;top:359px;width:101.0px;text-align:center;font-size:12px;line-height:16px;color:#000">72.37</div>
<div class="a" style="left:951.5px;top:359px;width:101.0px;text-align:center;font-size:12px;line-height:16px;color:#000">USD</div>
<div class="a" style="left:1052.5px;top:359px;width:101.0px;text-align:center;font-size:12px;line-height:16px;color:#000">未结算</div>
<div class="a" style="left:35px;top:361px;width:14px;height:14px;border-radius:2.5px;border:2px solid #6d6a80;background:#fff"></div>
<div class="a" style="left:3px;top:381px;width:25px;height:24px;background:linear-gradient(90deg,#f7f7f7,#f0f0f0)"></div>
<div class="a" style="left:3px;top:384px;width:25px;text-align:center;font-size:12px;line-height:16px;color:#222">3</div>
<div class="a" style="left:29px;top:381px;width:1748px;height:24px;background:#fff"></div>
<div class="a" style="left:3px;top:405px;width:1774px;height:1px;border-top:1px dotted #d6d6d6"></div>
<div class="a" style="left:56.5px;top:384px;width:151.0px;text-align:center;font-size:12px;line-height:16px;color:#000">CP2306307273</div>
<div class="a" style="left:207.5px;top:384px;width:251.0px;text-align:center;font-size:12px;line-height:16px;color:#000">E2207227352</div>
<div class="a" style="left:463.0px;top:384px;width:236.0px;overflow:hidden;font-size:12px;line-height:16px;color:#000">Trimanson Express Limited</div>
<div class="a" style="left:850.5px;top:384px;width:101.0px;text-align:center;font-size:12px;line-height:16px;color:#000">5742.61</div>
<div class="a" style="left:951.5px;top:384px;width:101.0px;text-align:center;font-size:12px;line-height:16px;color:#000">USD</div>
<div class="a" style="left:1052.5px;top:384px;width:101.0px;text-align:center;font-size:12px;line-height:16px;color:#000">未结算</div>
<div class="a" style="left:35px;top:386px;width:14px;height:14px;border-radius:2.5px;border:2px solid #6d6a80;background:#fff"></div>
<div class="a" style="left:3px;top:406px;width:25px;height:24px;background:linear-gradient(90deg,#f7f7f7,#f0f0f0)"></div>
<div class="a" style="left:3px;top:409px;width:25px;text-align:center;font-size:12px;line-height:16px;color:#222">4</div>
<div class="a" style="left:29px;top:406px;width:1748px;height:24px;background:#f8f8f8"></div>
<div class="a" style="left:3px;top:430px;width:1774px;height:1px;border-top:1px dotted #d6d6d6"></div>
<div class="a" style="left:56.5px;top:409px;width:151.0px;text-align:center;font-size:12px;line-height:16px;color:#000">CP2306301853</div>
<div class="a" style="left:207.5px;top:409px;width:251.0px;text-align:center;font-size:12px;line-height:16px;color:#000">H2306302651_1</div>
<div class="a" style="left:463.0px;top:409px;width:236.0px;overflow:hidden;font-size:12px;line-height:16px;color:#000">IT测试账号</div>
<div class="a" style="left:850.5px;top:409px;width:101.0px;text-align:center;font-size:12px;line-height:16px;color:#000">14.47</div>
<div class="a" style="left:951.5px;top:409px;width:101.0px;text-align:center;font-size:12px;line-height:16px;color:#000">USD</div>
<div class="a" style="left:1052.5px;top:409px;width:101.0px;text-align:center;font-size:12px;line-height:16px;color:#000">未结算</div>
<div class="a" style="left:35px;top:411px;width:14px;height:14px;border-radius:2.5px;border:2px solid #6d6a80;background:#fff"></div>
<div class="a" style="left:3px;top:431px;width:25px;height:24px;background:linear-gradient(90deg,#f7f7f7,#f0f0f0)"></div>
<div class="a" style="left:3px;top:434px;width:25px;text-align:center;font-size:12px;line-height:16px;color:#222">5</div>
<div class="a" style="left:29px;top:431px;width:1748px;height:24px;background:#fff"></div>
<div class="a" style="left:3px;top:455px;width:1774px;height:1px;border-top:1px dotted #d6d6d6"></div>
<div class="a" style="left:56.5px;top:434px;width:151.0px;text-align:center;font-size:12px;line-height:16px;color:#000">CP2306295497</div>
<div class="a" style="left:207.5px;top:434px;width:251.0px;text-align:center;font-size:12px;line-height:16px;color:#000">H2110163766_1</div>
<div class="a" style="left:463.0px;top:434px;width:236.0px;overflow:hidden;font-size:12px;line-height:16px;color:#000">Trimanson Express Limited</div>
<div class="a" style="left:850.5px;top:434px;width:101.0px;text-align:center;font-size:12px;line-height:16px;color:#000">1122.95</div>
<div class="a" style="left:951.5px;top:434px;width:101.0px;text-align:center;font-size:12px;line-height:16px;color:#000">USD</div>
<div class="a" style="left:1052.5px;top:434px;width:101.0px;text-align:center;font-size:12px;line-height:16px;color:#000">未结算</div>
<div class="a" style="left:35px;top:436px;width:14px;height:14px;border-radius:2.5px;border:2px solid #6d6a80;background:#fff"></div>
<div class="a" style="left:3px;top:456px;width:25px;height:24px;background:linear-gradient(90deg,#f7f7f7,#f0f0f0)"></div>
<div class="a" style="left:3px;top:459px;width:25px;text-align:center;font-size:12px;line-height:16px;color:#222">6</div>
<div class="a" style="left:29px;top:456px;width:1748px;height:24px;background:#f8f8f8"></div>
<div class="a" style="left:3px;top:480px;width:1774px;height:1px;border-top:1px dotted #d6d6d6"></div>
<div class="a" style="left:56.5px;top:459px;width:151.0px;text-align:center;font-size:12px;line-height:16px;color:#000">CP2306293948</div>
<div class="a" style="left:207.5px;top:459px;width:251.0px;text-align:center;font-size:12px;line-height:16px;color:#000">H2205279687_1</div>
<div class="a" style="left:463.0px;top:459px;width:236.0px;overflow:hidden;font-size:12px;line-height:16px;color:#000">烟台齐力电子商务有限公司</div>
<div class="a" style="left:850.5px;top:459px;width:101.0px;text-align:center;font-size:12px;line-height:16px;color:#000">465633.9</div>
<div class="a" style="left:951.5px;top:459px;width:101.0px;text-align:center;font-size:12px;line-height:16px;color:#000">EUR</div>
<div class="a" style="left:1052.5px;top:459px;width:101.0px;text-align:center;font-size:12px;line-height:16px;color:#000">未结算</div>
<div class="a" style="left:35px;top:461px;width:14px;height:14px;border-radius:2.5px;border:2px solid #6d6a80;background:#fff"></div>
<div class="a" style="left:3px;top:481px;width:25px;height:24px;background:linear-gradient(90deg,#f7f7f7,#f0f0f0)"></div>
<div class="a" style="left:3px;top:484px;width:25px;text-align:center;font-size:12px;line-height:16px;color:#222">7</div>
<div class="a" style="left:29px;top:481px;width:1748px;height:24px;background:#fff"></div>
<div class="a" style="left:3px;top:505px;width:1774px;height:1px;border-top:1px dotted #d6d6d6"></div>
<div class="a" style="left:56.5px;top:484px;width:151.0px;text-align:center;font-size:12px;line-height:16px;color:#000">CP2306298140</div>
<div class="a" style="left:207.5px;top:484px;width:251.0px;text-align:center;font-size:12px;line-height:16px;color:#000">H2209161556_2</div>
<div class="a" style="left:463.0px;top:484px;width:236.0px;overflow:hidden;font-size:12px;line-height:16px;color:#000">陈灿平</div>
<div class="a" style="left:850.5px;top:484px;width:101.0px;text-align:center;font-size:12px;line-height:16px;color:#000">-184.67</div>
<div class="a" style="left:951.5px;top:484px;width:101.0px;text-align:center;font-size:12px;line-height:16px;color:#000">EUR</div>
<div class="a" style="left:1052.5px;top:484px;width:101.0px;text-align:center;font-size:12px;line-height:16px;color:#000">未结算</div>
<div class="a" style="left:35px;top:486px;width:14px;height:14px;border-radius:2.5px;border:2px solid #6d6a80;background:#fff"></div>
<div class="a" style="left:3px;top:506px;width:25px;height:24px;background:linear-gradient(90deg,#f7f7f7,#f0f0f0)"></div>
<div class="a" style="left:3px;top:509px;width:25px;text-align:center;font-size:12px;line-height:16px;color:#222">8</div>
<div class="a" style="left:29px;top:506px;width:1748px;height:24px;background:#f8f8f8"></div>
<div class="a" style="left:3px;top:530px;width:1774px;height:1px;border-top:1px dotted #d6d6d6"></div>
<div class="a" style="left:56.5px;top:509px;width:151.0px;text-align:center;font-size:12px;line-height:16px;color:#000">CP2306293479</div>
<div class="a" style="left:207.5px;top:509px;width:251.0px;text-align:center;font-size:12px;line-height:16px;color:#000">H2212028915_1</div>
<div class="a" style="left:463.0px;top:509px;width:236.0px;overflow:hidden;font-size:12px;line-height:16px;color:#000">Les Paniers Du Bonheur</div>
<div class="a" style="left:850.5px;top:509px;width:101.0px;text-align:center;font-size:12px;line-height:16px;color:#000">1135.18</div>
<div class="a" style="left:951.5px;top:509px;width:101.0px;text-align:center;font-size:12px;line-height:16px;color:#000">EUR</div>
<div class="a" style="left:1052.5px;top:509px;width:101.0px;text-align:center;font-size:12px;line-height:16px;color:#000">未结算</div>
<div class="a" style="left:35px;top:511px;width:14px;height:14px;border-radius:2.5px;border:2px solid #6d6a80;background:#fff"></div>
<div class="a" style="left:3px;top:531px;width:25px;height:24px;background:linear-gradient(90deg,#f7f7f7,#f0f0f0)"></div>
<div class="a" style="left:3px;top:534px;width:25px;text-align:center;font-size:12px;line-height:16px;color:#222">9</div>
<div class="a" style="left:29px;top:531px;width:1748px;height:24px;background:#fff"></div>
<div class="a" style="left:3px;top:555px;width:1774px;height:1px;border-top:1px dotted #d6d6d6"></div>
<div class="a" style="left:56.5px;top:534px;width:151.0px;text-align:center;font-size:12px;line-height:16px;color:#000">CP2306295358</div>
<div class="a" style="left:207.5px;top:534px;width:251.0px;text-align:center;font-size:12px;line-height:16px;color:#000">H2210242103_3</div>
<div class="a" style="left:463.0px;top:534px;width:236.0px;overflow:hidden;font-size:12px;line-height:16px;color:#000">Esther Gonza</div>
<div class="a" style="left:850.5px;top:534px;width:101.0px;text-align:center;font-size:12px;line-height:16px;color:#000">2171.7</div>
<div class="a" style="left:951.5px;top:534px;width:101.0px;text-align:center;font-size:12px;line-height:16px;color:#000">EUR</div>
<div class="a" style="left:1052.5px;top:534px;width:101.0px;text-align:center;font-size:12px;line-height:16px;color:#000">未结算</div>
<div class="a" style="left:35px;top:536px;width:14px;height:14px;border-radius:2.5px;border:2px solid #6d6a80;background:#fff"></div>
<div class="a" style="left:3px;top:556px;width:25px;height:24px;background:linear-gradient(90deg,#f7f7f7,#f0f0f0)"></div>
<div class="a" style="left:3px;top:559px;width:25px;text-align:center;font-size:12px;line-height:16px;color:#222">10</div>
<div class="a" style="left:29px;top:556px;width:1748px;height:24px;background:#f8f8f8"></div>
<div class="a" style="left:3px;top:580px;width:1774px;height:1px;border-top:1px dotted #d6d6d6"></div>
<div class="a" style="left:56.5px;top:559px;width:151.0px;text-align:center;font-size:12px;line-height:16px;color:#000">CP2306299589</div>
<div class="a" style="left:207.5px;top:559px;width:251.0px;text-align:center;font-size:12px;line-height:16px;color:#000">H2211291577_1</div>
<div class="a" style="left:463.0px;top:559px;width:236.0px;overflow:hidden;font-size:12px;line-height:16px;color:#000">Les Paniers Du Bonheur</div>
<div class="a" style="left:850.5px;top:559px;width:101.0px;text-align:center;font-size:12px;line-height:16px;color:#000">1518.9</div>
<div class="a" style="left:951.5px;top:559px;width:101.0px;text-align:center;font-size:12px;line-height:16px;color:#000">USD</div>
<div class="a" style="left:1052.5px;top:559px;width:101.0px;text-align:center;font-size:12px;line-height:16px;color:#000">未结算</div>
<div class="a" style="left:35px;top:561px;width:14px;height:14px;border-radius:2.5px;border:2px solid #6d6a80;background:#fff"></div>
<div class="a" style="left:3px;top:581px;width:25px;height:24px;background:linear-gradient(90deg,#f7f7f7,#f0f0f0)"></div>
<div class="a" style="left:3px;top:584px;width:25px;text-align:center;font-size:12px;line-height:16px;color:#222">11</div>
<div class="a" style="left:29px;top:581px;width:1748px;height:24px;background:#fff"></div>
<div class="a" style="left:3px;top:605px;width:1774px;height:1px;border-top:1px dotted #d6d6d6"></div>
<div class="a" style="left:56.5px;top:584px;width:151.0px;text-align:center;font-size:12px;line-height:16px;color:#000">CP2306295425</div>
<div class="a" style="left:207.5px;top:584px;width:251.0px;text-align:center;font-size:12px;line-height:16px;color:#000">H2212140906_1</div>
<div class="a" style="left:463.0px;top:584px;width:236.0px;overflow:hidden;font-size:12px;line-height:16px;color:#000">Josephine</div>
<div class="a" style="left:850.5px;top:584px;width:101.0px;text-align:center;font-size:12px;line-height:16px;color:#000">520</div>
<div class="a" style="left:951.5px;top:584px;width:101.0px;text-align:center;font-size:12px;line-height:16px;color:#000">USD</div>
<div class="a" style="left:1052.5px;top:584px;width:101.0px;text-align:center;font-size:12px;line-height:16px;color:#000">未结算</div>
<div class="a" style="left:35px;top:586px;width:14px;height:14px;border-radius:2.5px;border:2px solid #6d6a80;background:#fff"></div>
<div class="a" style="left:3px;top:606px;width:25px;height:24px;background:linear-gradient(90deg,#f7f7f7,#f0f0f0)"></div>
<div class="a" style="left:3px;top:609px;width:25px;text-align:center;font-size:12px;line-height:16px;color:#222">12</div>
<div class="a" style="left:29px;top:606px;width:1748px;height:24px;background:#f8f8f8"></div>
<div class="a" style="left:3px;top:630px;width:1774px;height:1px;border-top:1px dotted #d6d6d6"></div>
<div class="a" style="left:56.5px;top:609px;width:151.0px;text-align:center;font-size:12px;line-height:16px;color:#000">CP2306298365</div>
<div class="a" style="left:207.5px;top:609px;width:251.0px;text-align:center;font-size:12px;line-height:16px;color:#000">H2109308165_3</div>
<div class="a" style="left:463.0px;top:609px;width:236.0px;overflow:hidden;font-size:12px;line-height:16px;color:#000">International Djibouti Industrial Parks Operat</div>
<div class="a" style="left:850.5px;top:609px;width:101.0px;text-align:center;font-size:12px;line-height:16px;color:#000">2989.8</div>
<div class="a" style="left:951.5px;top:609px;width:101.0px;text-align:center;font-size:12px;line-height:16px;color:#000">USD</div>
<div class="a" style="left:1052.5px;top:609px;width:101.0px;text-align:center;font-size:12px;line-height:16px;color:#000">未结算</div>
<div class="a" style="left:35px;top:611px;width:14px;height:14px;border-radius:2.5px;border:2px solid #6d6a80;background:#fff"></div>
<div class="a" style="left:3px;top:631px;width:25px;height:24px;background:linear-gradient(90deg,#f7f7f7,#f0f0f0)"></div>
<div class="a" style="left:3px;top:634px;width:25px;text-align:center;font-size:12px;line-height:16px;color:#222">13</div>
<div class="a" style="left:29px;top:631px;width:1748px;height:24px;background:#fff"></div>
<div class="a" style="left:3px;top:655px;width:1774px;height:1px;border-top:1px dotted #d6d6d6"></div>
<div class="a" style="left:56.5px;top:634px;width:151.0px;text-align:center;font-size:12px;line-height:16px;color:#000">CP2306298658</div>
<div class="a" style="left:207.5px;top:634px;width:251.0px;text-align:center;font-size:12px;line-height:16px;color:#000">E2207267312</div>
<div class="a" style="left:463.0px;top:634px;width:236.0px;overflow:hidden;font-size:12px;line-height:16px;color:#000">Trimanson Express Limited</div>
<div class="a" style="left:850.5px;top:634px;width:101.0px;text-align:center;font-size:12px;line-height:16px;color:#000">54924</div>
<div class="a" style="left:951.5px;top:634px;width:101.0px;text-align:center;font-size:12px;line-height:16px;color:#000">CNY</div>
<div class="a" style="left:1052.5px;top:634px;width:101.0px;text-align:center;font-size:12px;line-height:16px;color:#000">未结算</div>
<div class="a" style="left:35px;top:636px;width:14px;height:14px;border-radius:2.5px;border:2px solid #6d6a80;background:#fff"></div>
<div class="a" style="left:3px;top:656px;width:25px;height:24px;background:linear-gradient(90deg,#f7f7f7,#f0f0f0)"></div>
<div class="a" style="left:3px;top:659px;width:25px;text-align:center;font-size:12px;line-height:16px;color:#222">14</div>
<div class="a" style="left:29px;top:656px;width:1748px;height:24px;background:#127dd6"></div>
<div class="a" style="left:3px;top:680px;width:1774px;height:1px;border-top:1px dotted #d6d6d6"></div>
<div class="a" style="left:3px;top:680px;width:26px;height:1px;background:#2a7fd0"></div>
<div class="a" style="left:56.5px;top:659px;width:151.0px;text-align:center;font-size:12px;line-height:16px;color:#fff"><span style="background:#5b9bd0;color:#fff">CP2306288472</span></div>
<div class="a" style="left:207.5px;top:659px;width:251.0px;text-align:center;font-size:12px;line-height:16px;color:#fff">H2212131155_1</div>
<div class="a" style="left:463.0px;top:659px;width:236.0px;overflow:hidden;font-size:12px;line-height:16px;color:#fff">Elagu Albert</div>
<div class="a" style="left:850.5px;top:659px;width:101.0px;text-align:center;font-size:12px;line-height:16px;color:#fff">760</div>
<div class="a" style="left:951.5px;top:659px;width:101.0px;text-align:center;font-size:12px;line-height:16px;color:#fff">USD</div>
<div class="a" style="left:1052.5px;top:659px;width:101.0px;text-align:center;font-size:12px;line-height:16px;color:#fff">未结算</div>
<div class="a" style="left:35px;top:661px;width:14.5px;height:14.5px;border-radius:3px;background:#1a66f2"><svg style="position:absolute;left:2.5px;top:3px" width="10" height="9" viewBox="0 0 10 9"><path d="M1 4.8L3.8 7.6L9 1.6" stroke="#fff" stroke-width="2" fill="none" stroke-linecap="round" stroke-linejoin="round"/></svg></div>
<div class="a" style="left:3px;top:681px;width:25px;height:24px;background:linear-gradient(90deg,#f7f7f7,#f0f0f0)"></div>
<div class="a" style="left:3px;top:684px;width:25px;text-align:center;font-size:12px;line-height:16px;color:#222">15</div>
<div class="a" style="left:29px;top:681px;width:1748px;height:24px;background:#fff"></div>
<div class="a" style="left:3px;top:705px;width:1774px;height:1px;border-top:1px dotted #d6d6d6"></div>
<div class="a" style="left:56.5px;top:684px;width:151.0px;text-align:center;font-size:12px;line-height:16px;color:#000">CP2306244436</div>
<div class="a" style="left:207.5px;top:684px;width:251.0px;text-align:center;font-size:12px;line-height:16px;color:#000">E2207265238</div>
<div class="a" style="left:463.0px;top:684px;width:236.0px;overflow:hidden;font-size:12px;line-height:16px;color:#000">Trimanson Express Limited</div>
<div class="a" style="left:850.5px;top:684px;width:101.0px;text-align:center;font-size:12px;line-height:16px;color:#000">7649.77</div>
<div class="a" style="left:951.5px;top:684px;width:101.0px;text-align:center;font-size:12px;line-height:16px;color:#000">EUR</div>
<div class="a" style="left:1052.5px;top:684px;width:101.0px;text-align:center;font-size:12px;line-height:16px;color:#000">未结算</div>
<div class="a" style="left:35px;top:686px;width:14px;height:14px;border-radius:2.5px;border:2px solid #6d6a80;background:#fff"></div>
<div class="a" style="left:3px;top:706px;width:25px;height:24px;background:linear-gradient(90deg,#f7f7f7,#f0f0f0)"></div>
<div class="a" style="left:3px;top:709px;width:25px;text-align:center;font-size:12px;line-height:16px;color:#222">16</div>
<div class="a" style="left:29px;top:706px;width:1748px;height:24px;background:#f8f8f8"></div>
<div class="a" style="left:3px;top:730px;width:1774px;height:1px;border-top:1px dotted #d6d6d6"></div>
<div class="a" style="left:56.5px;top:709px;width:151.0px;text-align:center;font-size:12px;line-height:16px;color:#000">CP2306202895</div>
<div class="a" style="left:207.5px;top:709px;width:251.0px;text-align:center;font-size:12px;line-height:16px;color:#000">H2306088117_2_1</div>
<div class="a" style="left:463.0px;top:709px;width:236.0px;overflow:hidden;font-size:12px;line-height:16px;color:#000">IT测试账号</div>
<div class="a" style="left:850.5px;top:709px;width:101.0px;text-align:center;font-size:12px;line-height:16px;color:#000">0.03</div>
<div class="a" style="left:951.5px;top:709px;width:101.0px;text-align:center;font-size:12px;line-height:16px;color:#000">CNY</div>
<div class="a" style="left:1052.5px;top:709px;width:101.0px;text-align:center;font-size:12px;line-height:16px;color:#000">未结算</div>
<div class="a" style="left:35px;top:711px;width:14px;height:14px;border-radius:2.5px;border:2px solid #6d6a80;background:#fff"></div>
<div class="a" style="left:3px;top:731px;width:25px;height:24px;background:linear-gradient(90deg,#f7f7f7,#f0f0f0)"></div>
<div class="a" style="left:3px;top:734px;width:25px;text-align:center;font-size:12px;line-height:16px;color:#222">17</div>
<div class="a" style="left:29px;top:731px;width:1748px;height:24px;background:#fff"></div>
<div class="a" style="left:3px;top:755px;width:1774px;height:1px;border-top:1px dotted #d6d6d6"></div>
<div class="a" style="left:56.5px;top:734px;width:151.0px;text-align:center;font-size:12px;line-height:16px;color:#000">CP2303078449</div>
<div class="a" style="left:207.5px;top:734px;width:251.0px;text-align:center;font-size:12px;line-height:16px;color:#000">H2211307163_1</div>
<div class="a" style="left:463.0px;top:734px;width:236.0px;overflow:hidden;font-size:12px;line-height:16px;color:#000">MAYING CO.,LTD</div>
<div class="a" style="left:850.5px;top:734px;width:101.0px;text-align:center;font-size:12px;line-height:16px;color:#000">10836.96</div>
<div class="a" style="left:951.5px;top:734px;width:101.0px;text-align:center;font-size:12px;line-height:16px;color:#000">USD</div>
<div class="a" style="left:1052.5px;top:734px;width:101.0px;text-align:center;font-size:12px;line-height:16px;color:#000">未结算</div>
<div class="a" style="left:35px;top:736px;width:14px;height:14px;border-radius:2.5px;border:2px solid #6d6a80;background:#fff"></div>
<div class="a" style="left:3px;top:756px;width:25px;height:24px;background:linear-gradient(90deg,#f7f7f7,#f0f0f0)"></div>
<div class="a" style="left:3px;top:759px;width:25px;text-align:center;font-size:12px;line-height:16px;color:#222">18</div>
<div class="a" style="left:29px;top:756px;width:1748px;height:24px;background:#f8f8f8"></div>
<div class="a" style="left:3px;top:780px;width:1774px;height:1px;border-top:1px dotted #d6d6d6"></div>
<div class="a" style="left:56.5px;top:759px;width:151.0px;text-align:center;font-size:12px;line-height:16px;color:#000">CP2303078714</div>
<div class="a" style="left:207.5px;top:759px;width:251.0px;text-align:center;font-size:12px;line-height:16px;color:#000">H2211307163_1</div>
<div class="a" style="left:463.0px;top:759px;width:236.0px;overflow:hidden;font-size:12px;line-height:16px;color:#000">MAYING CO.,LTD</div>
<div class="a" style="left:850.5px;top:759px;width:101.0px;text-align:center;font-size:12px;line-height:16px;color:#000">10237.32</div>
<div class="a" style="left:951.5px;top:759px;width:101.0px;text-align:center;font-size:12px;line-height:16px;color:#000">USD</div>
<div class="a" style="left:1052.5px;top:759px;width:101.0px;text-align:center;font-size:12px;line-height:16px;color:#000">未结算</div>
<div class="a" style="left:35px;top:761px;width:14px;height:14px;border-radius:2.5px;border:2px solid #6d6a80;background:#fff"></div>
<div class="a" style="left:3px;top:781px;width:25px;height:24px;background:linear-gradient(90deg,#f7f7f7,#f0f0f0)"></div>
<div class="a" style="left:3px;top:784px;width:25px;text-align:center;font-size:12px;line-height:16px;color:#222">19</div>
<div class="a" style="left:29px;top:781px;width:1748px;height:24px;background:#fff"></div>
<div class="a" style="left:3px;top:805px;width:1774px;height:1px;border-top:1px dotted #d6d6d6"></div>
<div class="a" style="left:56.5px;top:784px;width:151.0px;text-align:center;font-size:12px;line-height:16px;color:#000">CP2303015666</div>
<div class="a" style="left:207.5px;top:784px;width:251.0px;text-align:center;font-size:12px;line-height:16px;color:#000">H2302143143_1</div>
<div class="a" style="left:463.0px;top:784px;width:236.0px;overflow:hidden;font-size:12px;line-height:16px;color:#000">Alomatu Holy</div>
<div class="a" style="left:850.5px;top:784px;width:101.0px;text-align:center;font-size:12px;line-height:16px;color:#000">1743.75</div>
<div class="a" style="left:951.5px;top:784px;width:101.0px;text-align:center;font-size:12px;line-height:16px;color:#000">CNY</div>
<div class="a" style="left:1052.5px;top:784px;width:101.0px;text-align:center;font-size:12px;line-height:16px;color:#000">未结算</div>
<div class="a" style="left:1425.5px;top:784px;width:351.0px;text-align:center;font-size:12px;line-height:16px;color:#000">CASCADE代收USD253</div>
<div class="a" style="left:35px;top:786px;width:14px;height:14px;border-radius:2.5px;border:2px solid #6d6a80;background:#fff"></div>
<div class="a" style="left:3px;top:806px;width:25px;height:24px;background:linear-gradient(90deg,#f7f7f7,#f0f0f0)"></div>
<div class="a" style="left:3px;top:809px;width:25px;text-align:center;font-size:12px;line-height:16px;color:#222">20</div>
<div class="a" style="left:29px;top:806px;width:1748px;height:24px;background:#f8f8f8"></div>
<div class="a" style="left:3px;top:830px;width:1774px;height:1px;border-top:1px dotted #d6d6d6"></div>
<div class="a" style="left:56.5px;top:809px;width:151.0px;text-align:center;font-size:12px;line-height:16px;color:#000">CP2302282012</div>
<div class="a" style="left:207.5px;top:809px;width:251.0px;text-align:center;font-size:12px;line-height:16px;color:#000">H2301295944_1</div>
<div class="a" style="left:463.0px;top:809px;width:236.0px;overflow:hidden;font-size:12px;line-height:16px;color:#000">Zainab Aminu Maiturare</div>
<div class="a" style="left:850.5px;top:809px;width:101.0px;text-align:center;font-size:12px;line-height:16px;color:#000">21.5</div>
<div class="a" style="left:951.5px;top:809px;width:101.0px;text-align:center;font-size:12px;line-height:16px;color:#000">USD</div>
<div class="a" style="left:1052.5px;top:809px;width:101.0px;text-align:center;font-size:12px;line-height:16px;color:#000">未结算</div>
<div class="a" style="left:35px;top:811px;width:14px;height:14px;border-radius:2.5px;border:2px solid #6d6a80;background:#fff"></div>
<div class="a" style="left:28px;top:331px;width:1px;height:500px;border-left:1px dotted #d6d6d6"></div>
<div class="a" style="left:56px;top:331px;width:1px;height:500px;border-left:1px dotted #d6d6d6"></div>
<div class="a" style="left:207px;top:331px;width:1px;height:500px;border-left:1px dotted #d6d6d6"></div>
<div class="a" style="left:458px;top:331px;width:1px;height:500px;border-left:1px dotted #d6d6d6"></div>
<div class="a" style="left:699px;top:331px;width:1px;height:500px;border-left:1px dotted #d6d6d6"></div>
<div class="a" style="left:850px;top:331px;width:1px;height:500px;border-left:1px dotted #d6d6d6"></div>
<div class="a" style="left:951px;top:331px;width:1px;height:500px;border-left:1px dotted #d6d6d6"></div>
<div class="a" style="left:1052px;top:331px;width:1px;height:500px;border-left:1px dotted #d6d6d6"></div>
<div class="a" style="left:1153px;top:331px;width:1px;height:500px;border-left:1px dotted #d6d6d6"></div>
<div class="a" style="left:1274px;top:331px;width:1px;height:500px;border-left:1px dotted #d6d6d6"></div>
<div class="a" style="left:1425px;top:331px;width:1px;height:500px;border-left:1px dotted #d6d6d6"></div>
<div class="a" style="left:1776px;top:331px;width:1px;height:500px;border-left:1px dotted #d6d6d6"></div>
<div class="a" style="left:29px;top:656px;width:1748px;height:24px;background:#127dd6"></div>
<div class="a" style="left:56px;top:656px;width:1px;height:24px;background:#3d93dc"></div>
<div class="a" style="left:207px;top:656px;width:1px;height:24px;background:#3d93dc"></div>
<div class="a" style="left:458px;top:656px;width:1px;height:24px;background:#3d93dc"></div>
<div class="a" style="left:699px;top:656px;width:1px;height:24px;background:#3d93dc"></div>
<div class="a" style="left:850px;top:656px;width:1px;height:24px;background:#3d93dc"></div>
<div class="a" style="left:951px;top:656px;width:1px;height:24px;background:#3d93dc"></div>
<div class="a" style="left:1052px;top:656px;width:1px;height:24px;background:#3d93dc"></div>
<div class="a" style="left:1153px;top:656px;width:1px;height:24px;background:#3d93dc"></div>
<div class="a" style="left:1274px;top:656px;width:1px;height:24px;background:#3d93dc"></div>
<div class="a" style="left:1425px;top:656px;width:1px;height:24px;background:#3d93dc"></div>
<div class="a" style="left:1776px;top:656px;width:1px;height:24px;background:#3d93dc"></div>
<div class="a" style="left:56.5px;top:659px;width:151.0px;text-align:center;font-size:12px;line-height:16px;color:#fff"><span style="background:#5b9bd0">CP2306288472</span></div>
<div class="a" style="left:207.5px;top:659px;width:251.0px;text-align:center;font-size:12px;line-height:16px;color:#fff">H2212131155_1</div>
<div class="a" style="left:463.0px;top:659px;width:236.0px;overflow:hidden;font-size:12px;line-height:16px;color:#fff">Elagu Albert</div>
<div class="a" style="left:850.5px;top:659px;width:101.0px;text-align:center;font-size:12px;line-height:16px;color:#fff">760</div>
<div class="a" style="left:951.5px;top:659px;width:101.0px;text-align:center;font-size:12px;line-height:16px;color:#fff">USD</div>
<div class="a" style="left:1052.5px;top:659px;width:101.0px;text-align:center;font-size:12px;line-height:16px;color:#fff">未结算</div>
<div class="a" style="left:35px;top:661px;width:14.5px;height:14.5px;border-radius:3px;background:#1a66f2"><svg style="position:absolute;left:2.5px;top:3px" width="10" height="9" viewBox="0 0 10 9"><path d="M1 4.8L3.8 7.6L9 1.6" stroke="#fff" stroke-width="2" fill="none" stroke-linecap="round" stroke-linejoin="round"/></svg></div>
<div class="a" style="left:844px;top:653px;width:207px;height:30px;border:3px solid #d0021b;border-radius:3px"></div>
<div class="a" style="left:3px;top:1003px;width:1914px;height:1px;background:#cfcfcf"></div>
<div class="a" style="left:3px;top:1004px;width:25px;height:24px;background:linear-gradient(90deg,#f7f7f7,#f0f0f0)"></div>
<div class="a" style="left:28px;top:1004px;width:1px;height:24px;border-left:1px dotted #d6d6d6"></div>
<div class="a" style="left:56px;top:1004px;width:1px;height:24px;border-left:1px dotted #d6d6d6"></div>
<div class="a" style="left:207px;top:1004px;width:1px;height:24px;border-left:1px dotted #d6d6d6"></div>
<div class="a" style="left:458px;top:1004px;width:1px;height:24px;border-left:1px dotted #d6d6d6"></div>
<div class="a" style="left:699px;top:1004px;width:1px;height:24px;border-left:1px dotted #d6d6d6"></div>
<div class="a" style="left:850px;top:1004px;width:1px;height:24px;border-left:1px dotted #d6d6d6"></div>
<div class="a" style="left:951px;top:1004px;width:1px;height:24px;border-left:1px dotted #d6d6d6"></div>
<div class="a" style="left:1052px;top:1004px;width:1px;height:24px;border-left:1px dotted #d6d6d6"></div>
<div class="a" style="left:1153px;top:1004px;width:1px;height:24px;border-left:1px dotted #d6d6d6"></div>
<div class="a" style="left:1274px;top:1004px;width:1px;height:24px;border-left:1px dotted #d6d6d6"></div>
<div class="a" style="left:1425px;top:1004px;width:1px;height:24px;border-left:1px dotted #d6d6d6"></div>
<div class="a" style="left:1776px;top:1004px;width:1px;height:24px;border-left:1px dotted #d6d6d6"></div>
<div class="a" style="left:56.5px;top:1007px;width:151.0px;text-align:center;font-size:12px;line-height:16px;color:#222">汇总</div>
<div class="a" style="left:207.5px;top:1007px;width:251.0px;text-align:center;font-size:12px;line-height:16px;color:#000">1</div>
<div class="a" style="left:850.5px;top:1007px;width:101.0px;text-align:center;font-size:12px;line-height:16px;color:#000">760 (USD);</div>
<div class="a" style="left:3px;top:1028px;width:1914px;height:1px;border-top:1px dotted #cfcfcf"></div>
<div class="a" style="left:841px;top:1000px;width:115px;height:29px;border:3px solid #d0021b;border-radius:3px"></div>
<div class="a" style="left:3px;top:1029px;width:1914px;height:26px;background:#f5f5f5"></div>
<div class="a" style="left:0;top:1053px;width:1920px;height:2px;background:#e3e7ee"></div>
<div class="a" style="left:9px;top:1035px;width:41px;height:20px;border:1px solid #c8c8c8;background:#eaeaea;font-size:13px;line-height:18px;color:#000;padding-left:2px">20<svg style="position:absolute;left:28px;top:7px" width="9" height="6" viewBox="0 0 9 6"><path d="M1 1L4.5 4.5L8 1" stroke="#222" stroke-width="1.4" fill="none"/></svg></div>
<div class="a" style="left:57px;top:1033px;width:1px;height:22px;background:#d4d4d4;border-right:1px solid #fff"></div>
<div class="a" style="left:117px;top:1033px;width:1px;height:22px;background:#d4d4d4;border-right:1px solid #fff"></div>
<div class="a" style="left:210px;top:1033px;width:1px;height:22px;background:#d4d4d4;border-right:1px solid #fff"></div>
<div class="a" style="left:270px;top:1033px;width:1px;height:22px;background:#d4d4d4;border-right:1px solid #fff"></div>
<svg class="a" style="left:70px;top:1038px" width="9" height="12" viewBox="0 0 9 12"><rect x="0" y="1" width="1.6" height="10" fill="#777"/><path d="M9 1V11L2.5 6Z" fill="#777"/></svg>
<svg class="a" style="left:99px;top:1038px" width="7" height="12" viewBox="0 0 7 12"><path d="M6.5 1V11L0.5 6Z" fill="#777"/></svg>
<div class="a" style="left:126px;top:1036px;font-size:13px;line-height:16px;color:#000">第</div>
<div class="a" style="left:140px;top:1035px;width:31px;height:20px;border:1px solid #ddd;background:#fff;font-size:13px;line-height:18px;padding-left:4px;color:#000">1</div>
<div class="a" style="left:172px;top:1036px;font-size:13px;line-height:16px;color:#000">共2页</div>
<svg class="a" style="left:223px;top:1038px" width="8" height="12" viewBox="0 0 8 12"><path d="M0.5 1V11L7.5 6Z" fill="#111"/></svg>
<svg class="a" style="left:251px;top:1038px" width="9" height="12" viewBox="0 0 9 12"><path d="M0 1V11L6.5 6Z" fill="#111"/><rect x="7.2" y="1" width="1.8" height="10" fill="#111"/></svg>
<svg class="a" style="left:281px;top:1037px" width="12" height="13" viewBox="0 0 12 13"><path d="M9.5 4.5A4.5 4.5 0 1 1 6 2.5" stroke="#444" stroke-width="1.6" fill="none"/><path d="M5 0L9 2.5L5 5Z" fill="#444"/></svg>
<div class="a" style="left:1790px;top:1036px;width:120px;text-align:right;font-size:12px;line-height:16px;color:#000">显示1到20,共24记录</div>
<div class="a" style="left:0;top:1049px;width:6px;height:6px;background:radial-gradient(circle at 6px 0,transparent 5.5px,#000 6px)"></div>
<div class="a" style="left:1914px;top:1049px;width:6px;height:6px;background:radial-gradient(circle at 0 0,transparent 5.5px,#000 6px)"></div>
<div class="a" style="left:1884px;top:615px;width:34px;height:1px;background:rgba(0,0,0,.03)"></div>
<svg class="a" style="left:1886px;top:581px" width="23" height="23" viewBox="0 0 23 23"><path d="M11 1L2.5 11.5L11 22M21 1L12.5 11.5L21 22" stroke="#8c8c8c" stroke-width="2.5" fill="none"/></svg>
</body></html>
